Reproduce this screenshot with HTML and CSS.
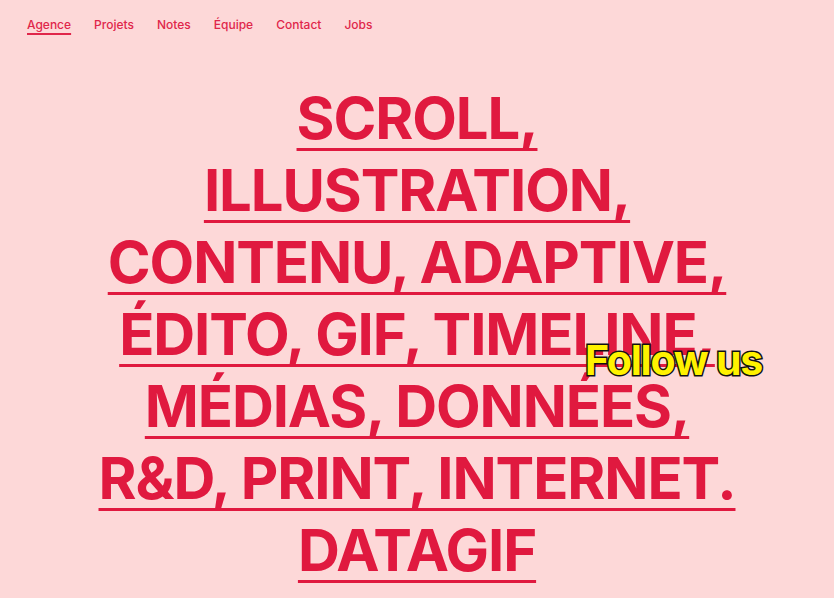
FILE: index.html
```html
<!DOCTYPE html>
<html lang="fr">
<head>
<meta charset="utf-8">
<title>Agence</title>
<link rel="stylesheet" href="styles.css">
</head>
<body>
<nav class="nav">
  <a class="nav-item active" href="#">Agence</a>
  <a class="nav-item" href="#">Projets</a>
  <a class="nav-item" href="#">Notes</a>
  <a class="nav-item" href="#">Équipe</a>
  <a class="nav-item" href="#">Contact</a>
  <a class="nav-item" href="#">Jobs</a>
</nav>
<main class="hero">
  <h1 class="headline">
    <a class="hl" href="#">SCROLL,</a><br>
    <a class="hl" href="#">ILLUSTRATION,</a><br>
    <a class="hl" href="#">CONTENU, ADAPTIVE,</a><br>
    <a class="hl" href="#">ÉDITO, GIF, TIMELINE,</a><br>
    <a class="hl" href="#">MÉDIAS, DONNÉES,</a><br>
    <a class="hl" href="#">R&amp;D, PRINT, INTERNET.</a><br>
    <a class="hl" href="#">DATAGIF</a>
  </h1>
  <div class="follow">Follow us</div>
</main>
</body>
</html>
```
FILE: styles.css
```css
html, body {
  margin: 0;
  padding: 0;
}
body {
  background: #fdd8d8;
  font-family: Inter, "Noto Sans", sans-serif;
  color: #e0193f;
  width: 834px;
  height: 598px;
  overflow: hidden;
}
.nav {
  display: flex;
  gap: 23px;
  padding: 16px 0 0 27px;
  height: 24px;
}
.nav-item {
  font-size: 12px;
  font-weight: 500;
  color: #e0264a;
  text-decoration: none;
  line-height: 18px;
}
.nav-item.active {
  text-decoration: underline;
  text-decoration-thickness: 2px;
  text-underline-offset: 4px;
}
.hero {
  position: relative;
  padding-top: 42px;
}
.headline {
  margin: 0;
  text-align: center;
  font-size: 58px;
  font-weight: 700;
  line-height: 72px;
  letter-spacing: -1.1px;
}
.hl {
  color: #e0193f;
  text-decoration: underline;
  text-decoration-thickness: 3px;
  text-underline-offset: 9px;
  text-decoration-skip-ink: none;
}
.follow {
  position: absolute;
  left: 585px;
  top: 295px;
  font-size: 41px;
  font-weight: 700;
  letter-spacing: -1.2px;
  color: #fff200;
  -webkit-text-stroke: 3px #111;
  paint-order: stroke fill;
}
```
